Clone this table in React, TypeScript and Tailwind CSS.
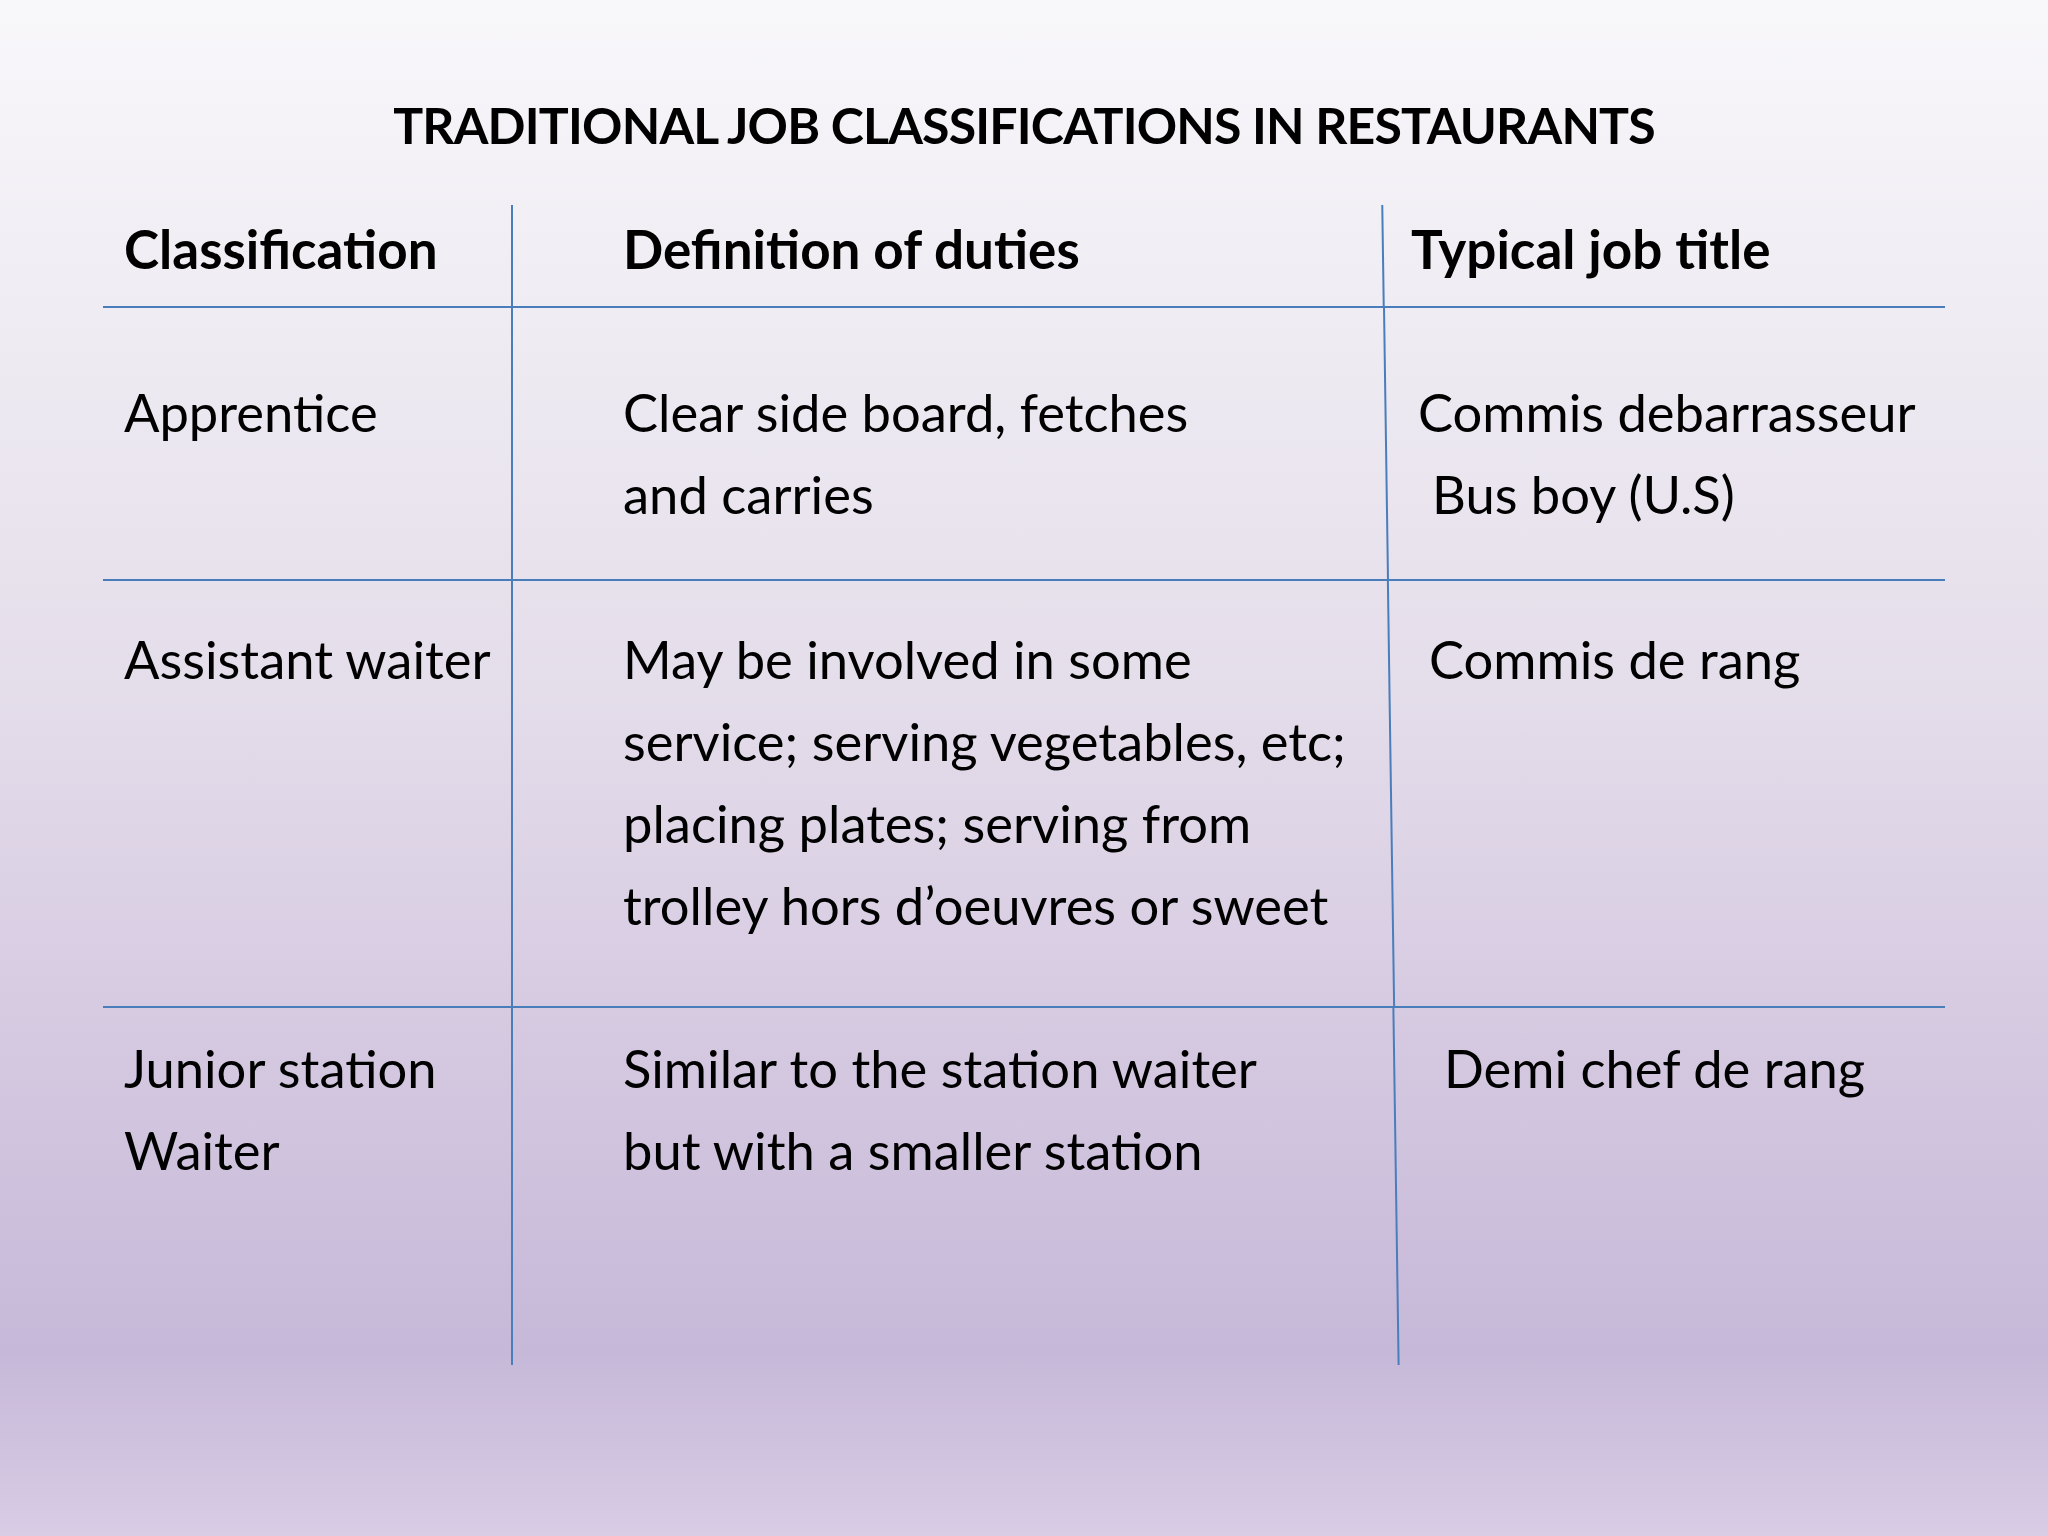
import React from 'react'

type Row = {
  height: string
  pad: string
  col2Width: string
  col3Pad: string
  classification: string[]
  duties: string[]
  titles: { text: string; indent?: string }[]
}

const rows: Row[] = [
  {
    height: 'h-[273px]',
    pad: 'pt-[63px]',
    col2Width: 'w-[872px]',
    col3Pad: 'pl-[31px]',
    classification: ['Apprentice'],
    duties: ['Clear side board, fetches', 'and carries'],
    titles: [{ text: 'Commis debarrasseur' }, { text: 'Bus boy (U.S)', indent: 'pl-[14px]' }],
  },
  {
    height: 'h-[427px]',
    pad: 'pt-[37px]',
    col2Width: 'w-[877px]',
    col3Pad: 'pl-[37px]',
    classification: ['Assistant waiter'],
    duties: [
      'May be involved in some',
      'service; serving vegetables, etc;',
      'placing plates; serving from',
      'trolley hors d\u2019oeuvres or sweet',
    ],
    titles: [{ text: 'Commis de rang' }],
  },
  {
    height: 'h-[357px]',
    pad: 'pt-[19px]',
    col2Width: 'w-[882px]',
    col3Pad: 'pl-[47px]',
    classification: ['Junior station', 'Waiter'],
    duties: ['Similar to the station waiter', 'but with a smaller station'],
    titles: [{ text: 'Demi chef de rang' }],
  },
]

// the right-hand rule on the slide leans slightly, the left one is straight
function Divider({ slanted }: { slanted?: boolean }) {
  return (
    <div
      className={`w-[2px] shrink-0 self-stretch bg-[#4a7ebb] ${slanted ? 'skew-x-[0.84deg]' : ''}`}
    />
  )
}

export default function App() {
  return (
    <div className="w-[2048px] h-[1536px] overflow-hidden pt-[93px] font-[Lato,'Liberation_Sans',sans-serif] text-black bg-[linear-gradient(180deg,#f8f7fa_0%,#efecf3_20%,#e4ddea_45%,#d7cbe2_65%,#c6b8d8_88%,#d9cce5_100%)]">
      <h1 className="text-center text-[50px] leading-[64px] tracking-[-0.8px] font-bold">
        TRADITIONAL JOB CLASSIFICATIONS IN RESTAURANTS
      </h1>

      <div className="ml-[103px] mt-[48px] w-[1842px]">
        {/* header */}
        <div className="flex h-[103px] border-b-2 border-[#4a7ebb] text-[53px] leading-[82px] font-bold">
          <div className="w-[408px] shrink-0 pl-[21px] pt-[3px]">Classification</div>
          <Divider />
          <div className="w-[869px] shrink-0 pl-[110px] pt-[3px]">Definition of duties</div>
          <Divider slanted />
          <div className="flex-1 pl-[27px] pt-[3px]">Typical job title</div>
        </div>

        {rows.map((row, i) => (
          <div
            key={i}
            className={`flex ${row.height} text-[52.5px] leading-[82px] ${i < rows.length - 1 ? 'border-b-2 border-[#4a7ebb]' : ''}`}
          >
            <div className={`w-[408px] shrink-0 pl-[21px] ${row.pad}`}>
              {row.classification.map((t) => (
                <div key={t}>{t}</div>
              ))}
            </div>
            <Divider />
            <div className={`${row.col2Width} shrink-0 pl-[110px] ${row.pad}`}>
              {row.duties.map((t) => (
                <div key={t} className="whitespace-nowrap">{t}</div>
              ))}
            </div>
            <Divider slanted />
            <div className={`flex-1 ${row.col3Pad} ${row.pad}`}>
              {row.titles.map((t) => (
                <div key={t.text} className={`whitespace-nowrap ${t.indent ?? ''}`}>
                  {t.text}
                </div>
              ))}
            </div>
          </div>
        ))}
      </div>
    </div>
  )
}
